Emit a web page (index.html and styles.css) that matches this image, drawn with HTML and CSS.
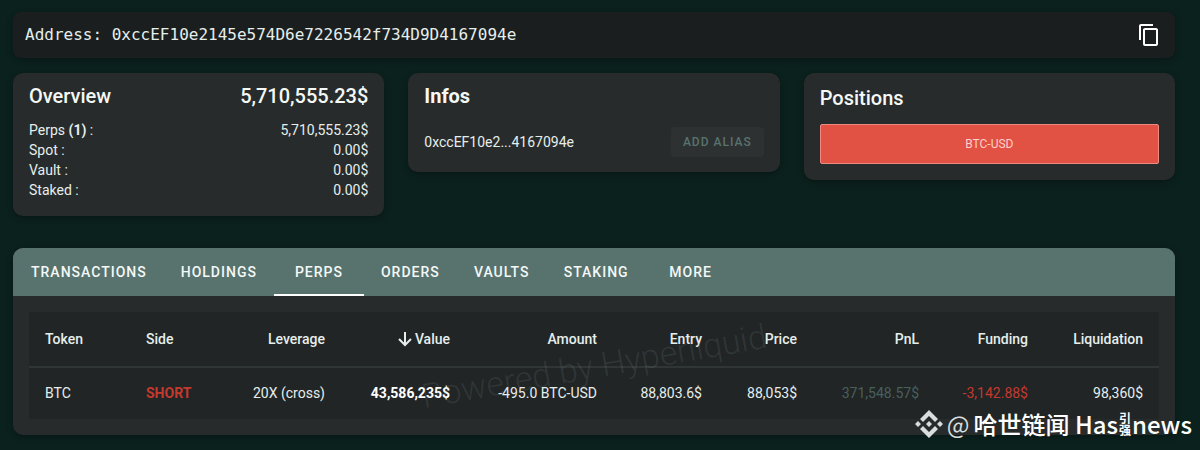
FILE: index.html
```html
<!DOCTYPE html>
<html lang="en">
<head>
  <meta charset="UTF-8" />
  <meta name="viewport" content="width=device-width, initial-scale=1.0" />
  <title>Address overview</title>
  <link rel="stylesheet" href="styles.css">
</head>
<body>

<header class="address-bar">
  <span class="address">Address: 0xccEF10e2145e574D6e7226542f734D9D4167094e</span>
  <button type="button" class="copy-btn" aria-label="Copy address">
    <svg viewBox="0 0 24 24" width="24" height="24" fill="currentColor"><path d="M16 1H4c-1.1 0-2 .9-2 2v14h2V3h12V1zm3 4H8c-1.1 0-2 .9-2 2v14c0 1.1.9 2 2 2h11c1.1 0 2-.9 2-2V7c0-1.1-.9-2-2-2zm0 16H8V7h11v14z"/></svg>
  </button>
</header>

<main>
  <div class="cards">
    <section class="card">
      <div class="card-head">
        <h2>Overview</h2>
        <span class="total">5,710,555.23$</span>
      </div>
      <dl class="balances">
        <div><dt>Perps <b>(1)</b> :</dt><dd>5,710,555.23$</dd></div>
        <div><dt>Spot :</dt><dd>0.00$</dd></div>
        <div><dt>Vault :</dt><dd>0.00$</dd></div>
        <div><dt>Staked :</dt><dd>0.00$</dd></div>
      </dl>
    </section>

    <section class="card infos">
      <h2>Infos</h2>
      <div class="alias-row">
        <span>0xccEF10e2...4167094e</span>
        <button type="button" class="alias-btn">ADD ALIAS</button>
      </div>
    </section>

    <section class="card positions">
      <h2>Positions</h2>
      <button type="button" class="position">BTC-USD</button>
    </section>
  </div>

  <section class="panel">
    <nav class="tabs">
      <a href="#transactions">TRANSACTIONS</a>
      <a href="#holdings">HOLDINGS</a>
      <a href="#perps" class="active">PERPS</a>
      <a href="#orders">ORDERS</a>
      <a href="#vaults">VAULTS</a>
      <a href="#staking">STAKING</a>
      <a href="#more">MORE</a>
    </nav>
    <div class="table-wrap">
      <table>
        <colgroup>
          <col class="c-token"><col class="c-side"><col class="c-leverage"><col class="c-value"><col class="c-amount">
          <col class="c-entry"><col class="c-price"><col class="c-pnl"><col class="c-funding"><col class="c-liq">
        </colgroup>
        <thead>
          <tr>
            <th class="left">Token</th>
            <th class="left">Side</th>
            <th>Leverage</th>
            <th><svg class="sort" viewBox="0 0 16 16" width="16" height="16"><path d="M8 1v13M2 8l6 6 6-6"/></svg>Value</th>
            <th>Amount</th>
            <th>Entry</th>
            <th>Price</th>
            <th>PnL</th>
            <th>Funding</th>
            <th>Liquidation</th>
          </tr>
        </thead>
        <tbody>
          <tr>
            <td class="left">BTC</td>
            <td class="left short">SHORT</td>
            <td>20X (cross)</td>
            <td class="value">43,586,235$</td>
            <td>-495.0 BTC-USD</td>
            <td>88,803.6$</td>
            <td>88,053$</td>
            <td class="pnl">371,548.57$</td>
            <td class="funding">-3,142.88$</td>
            <td>98,360$</td>
          </tr>
        </tbody>
      </table>
      <span class="powered">Powered by Hyperliquid</span>
    </div>
  </section>
</main>

<div class="credit">
  <svg viewBox="0 0 28 28" width="28" height="28" fill="currentColor"><path d="M14 0l9 9-3 3-6-6-6 6-3-3zM14 28l-9-9 3-3 6 6 6-6 3 3zM14 11l3 3-3 3-3-3zM3 11l3 3-3 3-3-3zM25 11l3 3-3 3-3-3z"/></svg>
  <span class="at">@</span>
  <span class="name">哈世链闻 Has<span class="stack"><span>引</span><span>强</span></span>news</span>
</div>

</body>
</html>
```

FILE: styles.css
```css
* {
  box-sizing: border-box;
}
body {
  margin: 0;
  padding: 12px 25px 15px 13px;
  background: #0b211d;
  color: #e6eeec;
  font-family: Roboto, sans-serif;
  font-size: 14px;
  line-height: 20px;
}
button {
  font-family: inherit;
  cursor: pointer;
}
h2 {
  margin: 0;
  color: #f4f8f7;
  font-size: 20px;
  font-weight: 500;
  line-height: 24px;
}
.address-bar {
  display: flex;
  align-items: center;
  justify-content: space-between;
  height: 46px;
  padding: 0 14px 0 12px;
  background: #1a1e1f;
  border-radius: 8px;
  box-shadow: 0 2px 6px rgba(0, 0, 0, 0.3);
}
.address {
  font-family: "DejaVu Sans Mono", monospace;
  font-size: 16px;
}
.copy-btn {
  display: flex;
  padding: 0;
  border: none;
  background: none;
  color: #fff;
}
.cards {
  display: grid;
  grid-template-columns: repeat(3, 1fr);
  align-items: start;
  gap: 24px;
  margin-top: 15px;
}
.card {
  padding: 11px 16px 16px;
  background: #272b2b;
  border-radius: 10px;
  box-shadow: 0 2px 6px rgba(0, 0, 0, 0.3);
}
.card-head {
  display: flex;
  justify-content: space-between;
}
.total {
  color: #f4f8f7;
  font-size: 20px;
  font-weight: 500;
  line-height: 24px;
}
.balances {
  margin: 12px 0 0;
}
.balances div {
  display: flex;
  justify-content: space-between;
}
.balances dd {
  margin: 0;
}
.infos {
  padding-bottom: 15px;
}
.infos h2 {
  font-weight: 700;
}
.alias-row {
  display: flex;
  align-items: center;
  justify-content: space-between;
  margin-top: 19px;
}
.alias-btn {
  height: 30px;
  padding: 0 12px;
  border: none;
  border-radius: 4px;
  background: #2d3131;
  color: #58736e;
  font-size: 12px;
  font-weight: 500;
  letter-spacing: 1px;
}
.positions {
  padding-top: 13px;
}
.position {
  display: block;
  width: 100%;
  height: 40px;
  margin-top: 14px;
  border: 1px solid #ee8b80;
  border-radius: 2px;
  background: #e15144;
  color: #fbd0ca;
  font-size: 12px;
}
.panel {
  margin-top: 32px;
  overflow: hidden;
  background: #272b2b;
  border-radius: 10px;
  box-shadow: 0 2px 6px rgba(0, 0, 0, 0.3);
}
.tabs {
  display: flex;
  height: 48px;
  padding-left: 1px;
  background: #58736e;
}
.tabs a {
  min-width: 90px;
  padding: 0 17px;
  border-bottom: 2px solid transparent;
  color: #f4f8f7;
  font-weight: 500;
  letter-spacing: 1px;
  line-height: 48px;
  text-align: center;
  text-decoration: none;
}
.tabs .active {
  border-color: #fff;
}
.table-wrap {
  position: relative;
  margin: 16px;
  background: #212526;
}
table {
  width: 100%;
  table-layout: fixed;
  border-collapse: collapse;
}
th,
td {
  padding: 0 16px 0 0;
  text-align: right;
  white-space: nowrap;
}
th {
  height: 55px;
  border-bottom: 2px solid #303535;
  font-weight: 500;
}
td {
  height: 52px;
  padding-bottom: 2px;
}
.left {
  padding-left: 16px;
  text-align: left;
}
.c-token { width: 101px; }
.c-side { width: 95px; }
.c-leverage { width: 116px; }
.c-value { width: 125px; }
.c-amount { width: 147px; }
.c-entry { width: 105px; }
.c-price { width: 95px; }
.c-pnl { width: 122px; }
.c-funding { width: 109px; }
.c-liq { width: 115px; }
.sort {
  margin-right: 2px;
  vertical-align: -3px;
  fill: none;
  stroke: currentColor;
  stroke-width: 2;
}
.value {
  color: #fff;
  font-weight: 700;
}
.short {
  color: #c5392d;
  font-weight: 700;
}
.pnl {
  color: #48605b;
}
.funding {
  color: #c5392d;
}
.powered {
  position: absolute;
  top: 50%;
  left: 50%;
  color: rgba(160, 180, 175, 0.12);
  font-size: 34px;
  font-weight: 300;
  line-height: 40px;
  white-space: nowrap;
  pointer-events: none;
  transform: translate(-50%, -50%) rotate(-10deg);
}
.credit {
  position: absolute;
  right: 8px;
  bottom: 11px;
  display: flex;
  align-items: center;
  gap: 4px;
  color: #fff;
  font-family: "Noto Sans CJK SC", sans-serif;
  font-size: 24px;
  line-height: 30px;
  white-space: nowrap;
}
.credit svg,
.credit .at {
  color: #d9dddd;
}
.name {
  display: flex;
  align-items: center;
  font-weight: 500;
  white-space: pre;
}
.stack {
  display: flex;
  flex-direction: column;
  margin: 0 1px;
  font-size: 12px;
  font-weight: 700;
  line-height: 12px;
}
```
